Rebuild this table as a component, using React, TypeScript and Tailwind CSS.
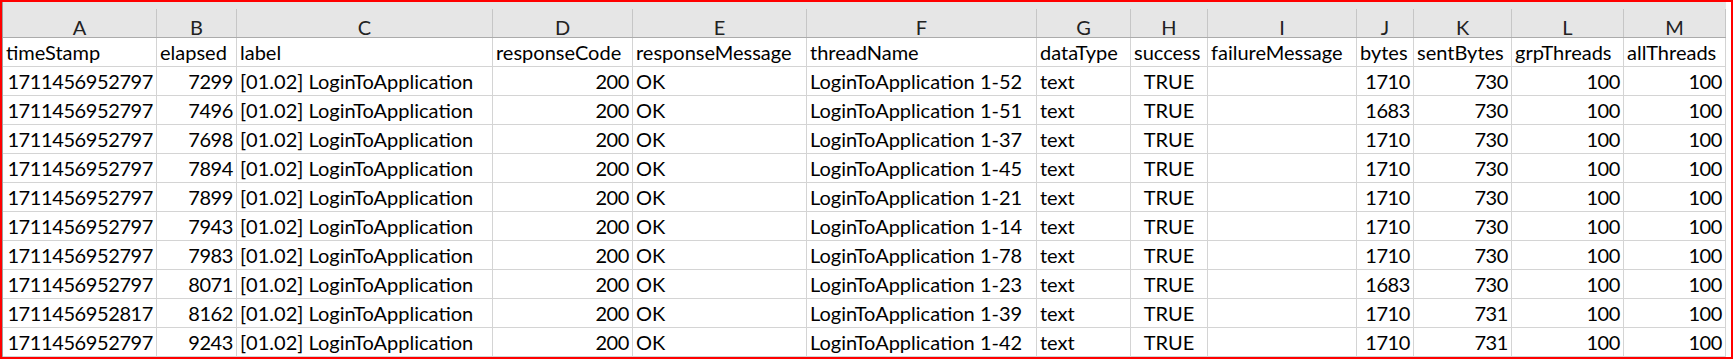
import React from 'react';

const COLS = [
    { letter: 'A', w: 'w-[154px]' },
    { letter: 'B', w: 'w-[80px]' },
    { letter: 'C', w: 'w-[256px]' },
    { letter: 'D', w: 'w-[140px]' },
    { letter: 'E', w: 'w-[174px]' },
    { letter: 'F', w: 'w-[230px]' },
    { letter: 'G', w: 'w-[94px]' },
    { letter: 'H', w: 'w-[77px]' },
    { letter: 'I', w: 'w-[149px]' },
    { letter: 'J', w: 'w-[57px]' },
    { letter: 'K', w: 'w-[98px]' },
    { letter: 'L', w: 'w-[112px]' },
    { letter: 'M', w: 'w-[102px]' },
];

const FIELDS = [
    'timeStamp', 'elapsed', 'label', 'responseCode', 'responseMessage', 'threadName',
    'dataType', 'success', 'failureMessage', 'bytes', 'sentBytes', 'grpThreads', 'allThreads',
];

// 'r' = number (right), 'l' = text (left), 'c' = boolean (center)
const ALIGN = ['r', 'r', 'l', 'r', 'l', 'l', 'l', 'c', 'l', 'r', 'r', 'r', 'r'];

const RAW: [string, string, string, string, string][] = [
    ['1711456952797', '7299', '1-52', '1710', '730'],
    ['1711456952797', '7496', '1-51', '1683', '730'],
    ['1711456952797', '7698', '1-37', '1710', '730'],
    ['1711456952797', '7894', '1-45', '1710', '730'],
    ['1711456952797', '7899', '1-21', '1710', '730'],
    ['1711456952797', '7943', '1-14', '1710', '730'],
    ['1711456952797', '7983', '1-78', '1710', '730'],
    ['1711456952797', '8071', '1-23', '1683', '730'],
    ['1711456952817', '8162', '1-39', '1710', '731'],
    ['1711456952797', '9243', '1-42', '1710', '731'],
];

const ROWS = RAW.map(([ts, el, th, by, sb]) => [
    ts, el, '[01.02] LoginToApplication', '200', 'OK', `LoginToApplication ${th}`,
    'text', 'TRUE', '', by, sb, '100', '100',
]);

const alignClass = (a: string) =>
    a === 'r'
        ? 'justify-end pr-[3px] tracking-[-0.4px]'
        : a === 'c'
          ? 'justify-center'
          : 'justify-start pl-[3px]';

export default function App() {
    return (
        <div className="w-[1733px] h-[359px] border-2 border-[#ff0000] bg-white overflow-hidden text-black font-['Lato',sans-serif] text-[20px]">
            <div className="flex flex-col border-l border-[#9e9e9e] w-fit">
                <div className="flex h-[36px] bg-[#e6e6e6] border-b border-[#ababab]">
                    {COLS.map((c) => (
                        <div key={c.letter} className={`${c.w} flex flex-col`}>
                            <div className="h-[8px]" />
                            <div className="flex-1 border-r border-[#c6c6c6] flex items-center justify-center pt-[8px] leading-none text-[#222]">
                                {c.letter}
                            </div>
                        </div>
                    ))}
                </div>
                {[FIELDS, ...ROWS].map((row, ri) => (
                    <div key={ri} className="flex h-[29px] border-b border-[#d4d4d4]">
                        {row.map((v, ci) => (
                            <div
                                key={ci}
                                className={`${COLS[ci].w} border-r border-[#d4d4d4] flex items-end pb-[1px] leading-[26px] whitespace-nowrap overflow-visible ${ri === 0 ? 'justify-start pl-[3px]' : alignClass(ALIGN[ci])}`}
                            >
                                {v}
                            </div>
                        ))}
                    </div>
                ))}
            </div>
        </div>
    );
}
